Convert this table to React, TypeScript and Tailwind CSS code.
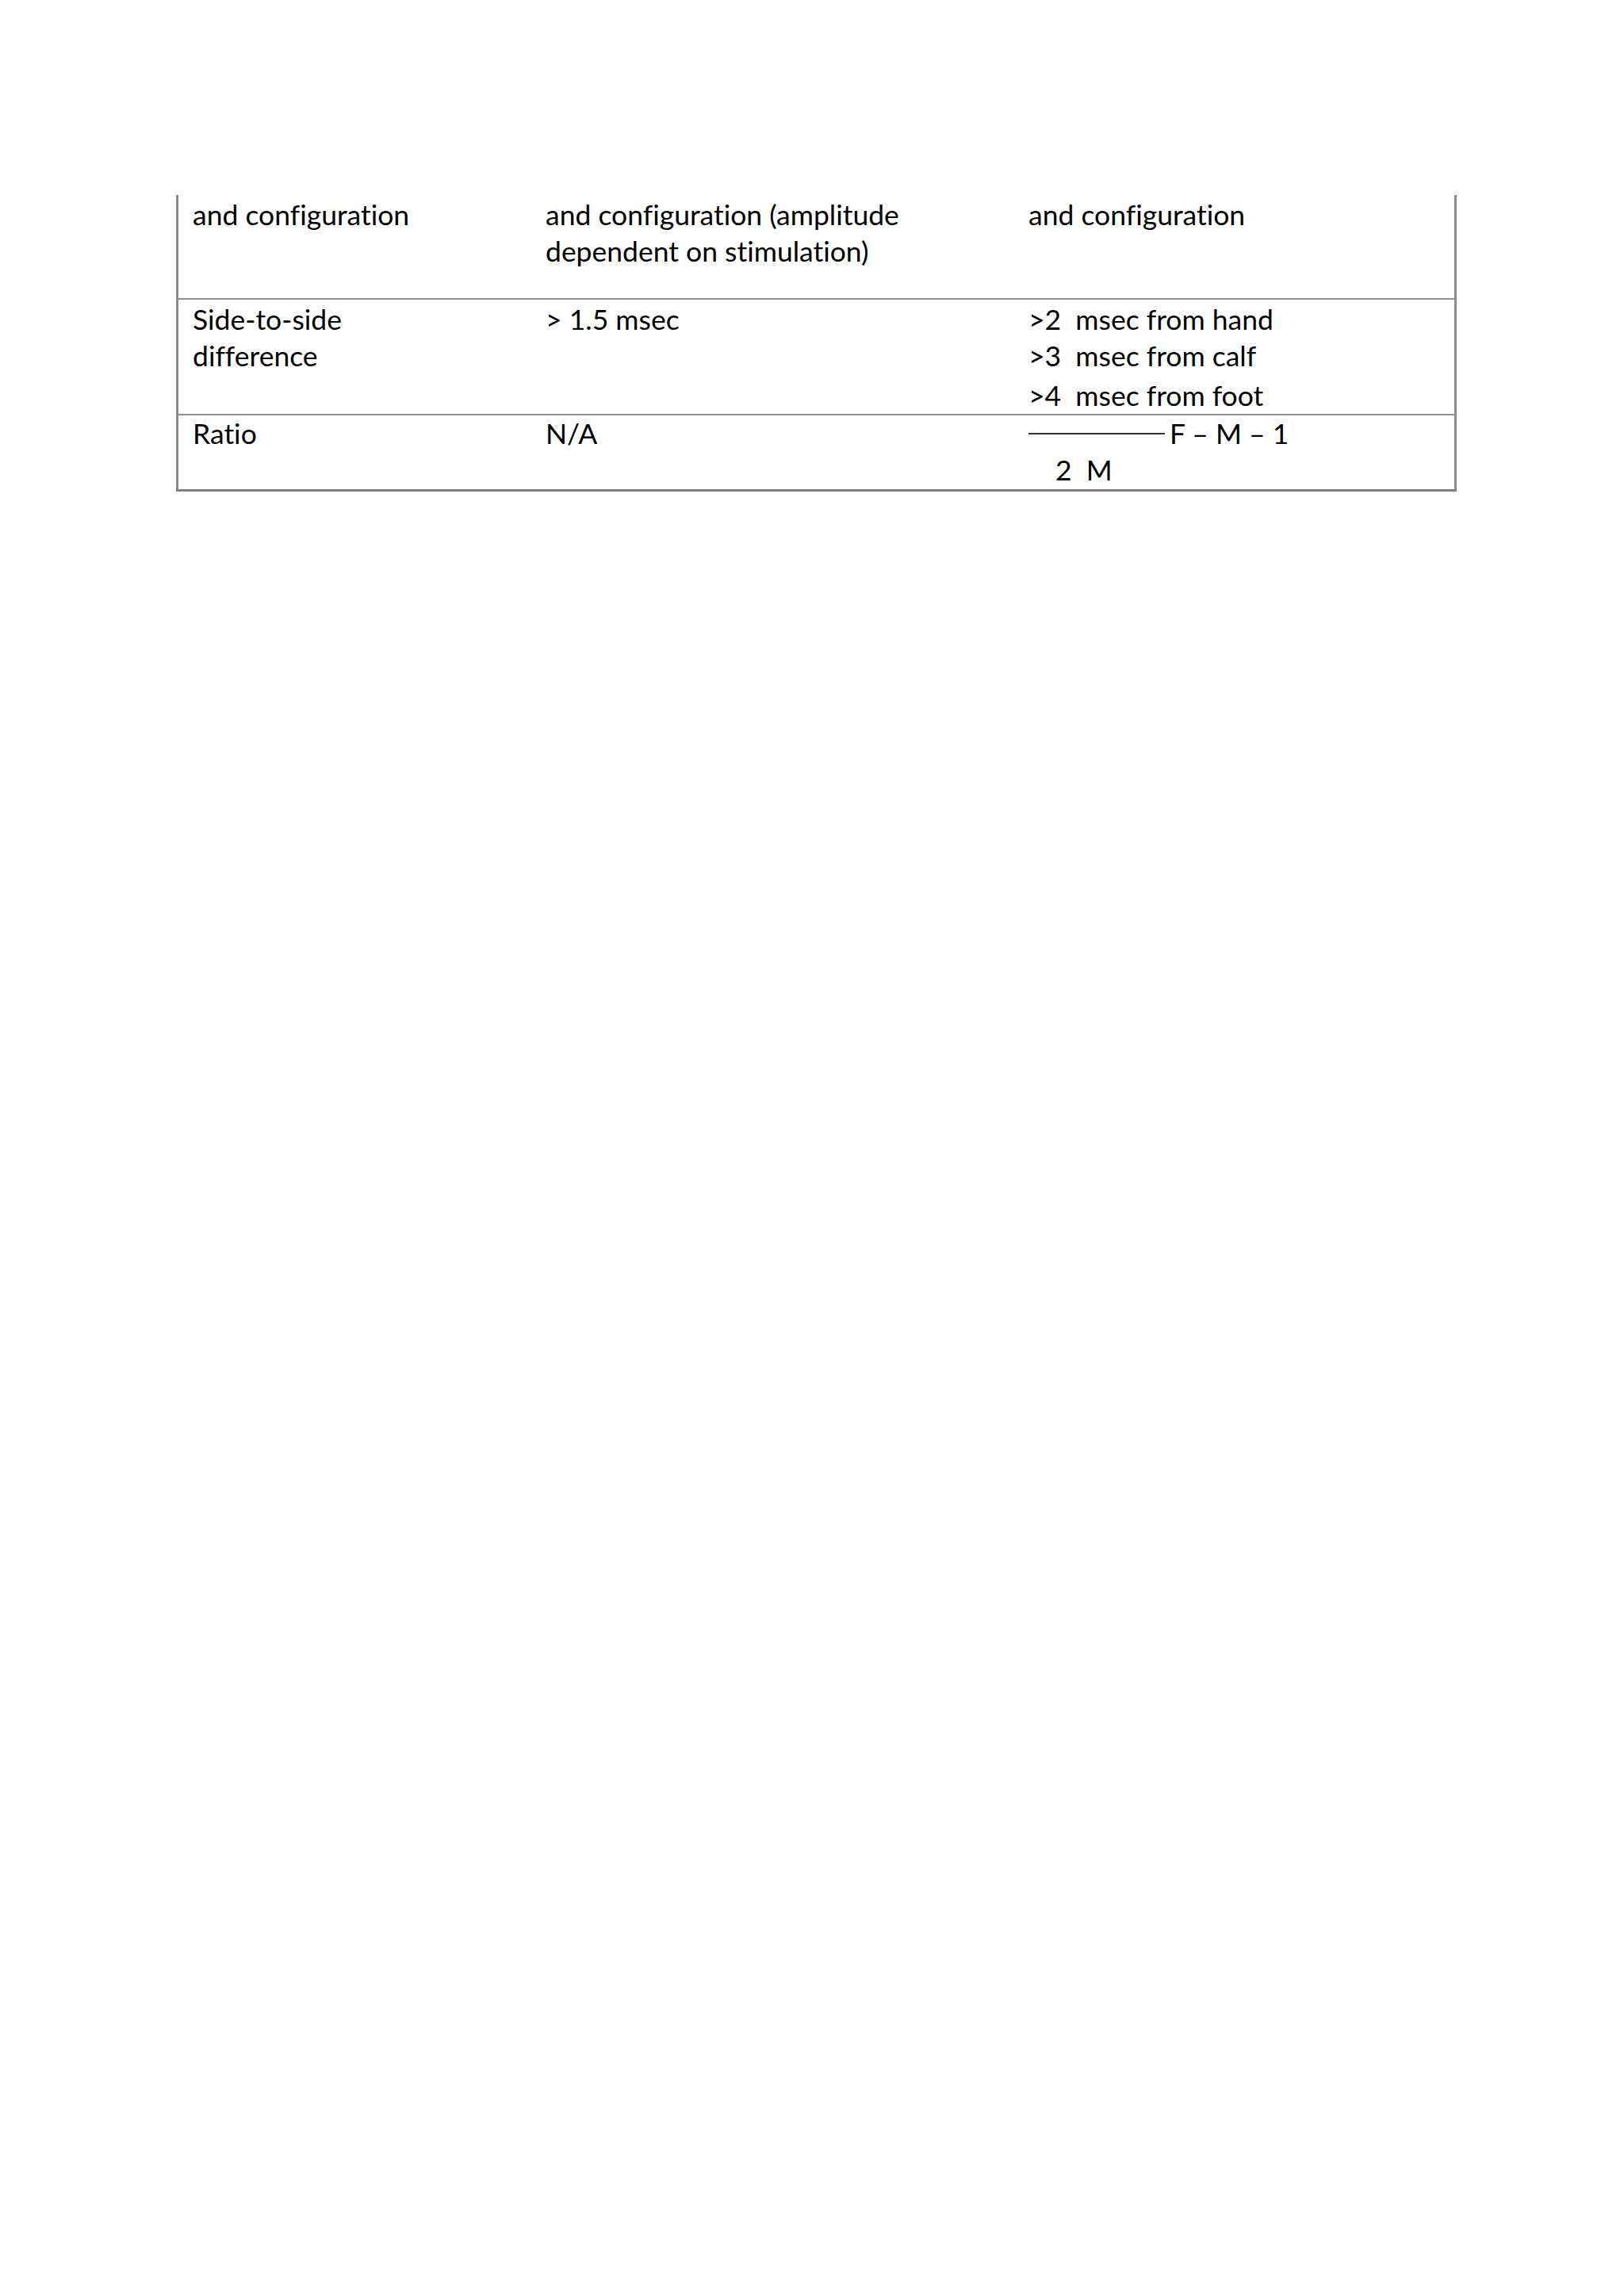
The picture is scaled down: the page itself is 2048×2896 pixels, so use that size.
const rows = [
  {
    label: ['and configuration'],
    normal: ['and configuration (amplitude', 'dependent on stimulation)'],
    abnormal: ['and configuration'],
    h: 'h-[132px]',
  },
  {
    label: ['Side-to-side', 'difference'],
    normal: ['> 1.5 msec'],
    abnormal: ['>2  msec from hand', '>3  msec from calf', '>4  msec from foot'],
    h: 'h-[146px]',
  },
];

function Lines({ lines }: { lines: string[] }) {
  return (
    <>
      {lines.map((l, i) => (
        <div key={l} className={`whitespace-pre ${i === 2 ? 'mt-[4px]' : ''}`}>
          {l}
        </div>
      ))}
    </>
  );
}

export default function App() {
  return (
    <div className="w-[2048px] h-[2896px] bg-white pt-[246px] pl-[222px] font-['Lato',sans-serif] text-[35.5px] leading-[46px] text-black [font-variant-ligatures:none]">
      <div className="w-[1615px] border-x-[3px] border-b-[3px] border-x-[#8a8a8a] border-b-[#7f7f7f]">
        {rows.map((r, i) => (
          <div key={i} className={`flex ${r.h} border-b-2 border-[#8f8f8f]`}>
            <div className="w-[442px] pl-[18px] pt-[2px]">
              <Lines lines={r.label} />
            </div>
            <div className="w-[609px] pl-[21px] pt-[2px]">
              <Lines lines={r.normal} />
            </div>
            <div className="flex-1 pl-[21px] pt-[2px]">
              <Lines lines={r.abnormal} />
            </div>
          </div>
        ))}
        <div className="flex h-[93px]">
          <div className="w-[442px] pl-[18px]">Ratio</div>
          <div className="w-[609px] pl-[21px]">N/A</div>
          <div className="flex-1 pl-[21px]">
            <div className="flex items-center">
              <span className="inline-block w-[172px] h-[2px] bg-[#333] mr-[6px]" />
              <span className="whitespace-pre">F – M – 1</span>
            </div>
            <div className="pl-[34px] whitespace-pre">2  M</div>
          </div>
        </div>
      </div>
    </div>
  );
}
